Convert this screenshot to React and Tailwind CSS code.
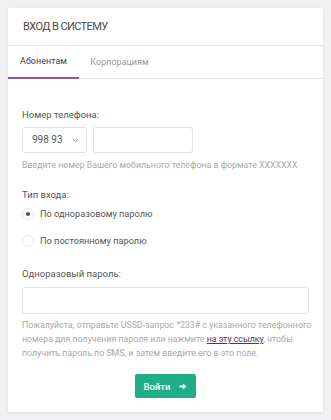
import React from "react";

export default function App() {
  return (
    <div className="w-[331px] h-[420px] bg-[#f1f1f3] pt-[8px] px-[8px]" style={{ fontFamily: "Roboto, 'Noto Sans', sans-serif" }}>
      <div className="bg-white w-[315px] h-[404px] shadow-[0_1px_3px_rgba(0,0,0,0.08)] flex flex-col">
        <div className="h-[38px] border-b border-[#e6e6e6] flex items-center pl-[15px] shrink-0">
          <span className="text-[11px] text-[#4a4a4a] leading-none tracking-[-0.6px]">ВХОД В СИСТЕМУ</span>
        </div>
        <div className="flex border-b border-[#e6e6e6] h-[33px] shrink-0">
          <div className="w-[71px] flex items-center justify-center border-b-2 border-[#a0548e] -mb-px">
            <span className="text-[9px] text-[#444] leading-none">Абонентам</span>
          </div>
          <div className="w-[81px] flex items-center justify-center -mb-px">
            <span className="text-[9px] text-[#9a9a9a] leading-none">Корпорациям</span>
          </div>
        </div>
        <div className="pl-[14px] pr-[14px] pt-[31px] flex flex-col">
          <span className="text-[9.5px] text-[#555] leading-none">Номер телефона:</span>
          <div className="flex gap-[6px] mt-[7px]">
            <div className="w-[65px] h-[26px] border border-[#e2e2e2] rounded-[3px] flex items-center pl-[9px] gap-[9px]">
              <span className="text-[10px] text-[#555] leading-none">998 93</span>
              <svg width="7" height="5" viewBox="0 0 7 5" className="mt-[1px]"><path d="M1 1.2 L3.5 3.6 L6 1.2" fill="none" stroke="#888" strokeWidth="0.9" /></svg>
            </div>
            <div className="w-[100px] h-[26px] border border-[#e2e2e2] rounded-[3px]" />
          </div>
          <span className="text-[8.8px] text-[#aaa] leading-none mt-[8px] whitespace-nowrap">Введите номер Вашего мобильного телефона в формате XXXXXXX</span>
          <span className="text-[9.5px] text-[#555] leading-none mt-[21px]">Тип входа:</span>
          <div className="flex items-center gap-[6px] mt-[8px]">
            <div className="w-[12px] h-[12px] rounded-full border border-[#e6e6e6] flex items-center justify-center">
              <div className="w-[4px] h-[4px] rounded-full bg-[#555]" />
            </div>
            <span className="text-[9.2px] text-[#555] leading-none">По одноразовому паролю</span>
          </div>
          <div className="flex items-center gap-[6px] mt-[15px]">
            <div className="w-[12px] h-[12px] rounded-full border border-[#e6e6e6]" />
            <span className="text-[9.2px] text-[#555] leading-none">По постоянному паролю</span>
          </div>
          <span className="text-[9.5px] text-[#555] leading-none mt-[22px]">Одноразовый пароль:</span>
          <div className="w-[287px] h-[27px] border border-[#e2e2e2] rounded-[3px] mt-[9px]" />
          <p className="text-[8.8px] text-[#aaa] leading-[14px] mt-[4px] whitespace-nowrap">
            Пожалуйста, отправьте USSD-запрос *233# с указанного телефонного
            <br />
            номера для получения пароля или нажмите{" "}
            <span className="text-[#5b2a6e] underline">на эту ссылку</span>, чтобы
            <br />
            получить пароль по SMS, и затем введите его в это поле.
          </p>
          <div className="flex justify-center mt-[14px]">
            <div className="w-[61px] h-[24px] bg-[#1fae86] rounded-[2px] flex items-center justify-center gap-[9px]">
              <span className="text-[9.5px] text-white font-medium leading-none">Войти</span>
              <svg width="8" height="7" viewBox="0 0 9 8"><path d="M0.5 2.8 H4.5 V0.5 L8.5 4 L4.5 7.5 V5.2 H0.5 Z" fill="white" /></svg>
            </div>
          </div>
        </div>
      </div>
    </div>
  );
}
